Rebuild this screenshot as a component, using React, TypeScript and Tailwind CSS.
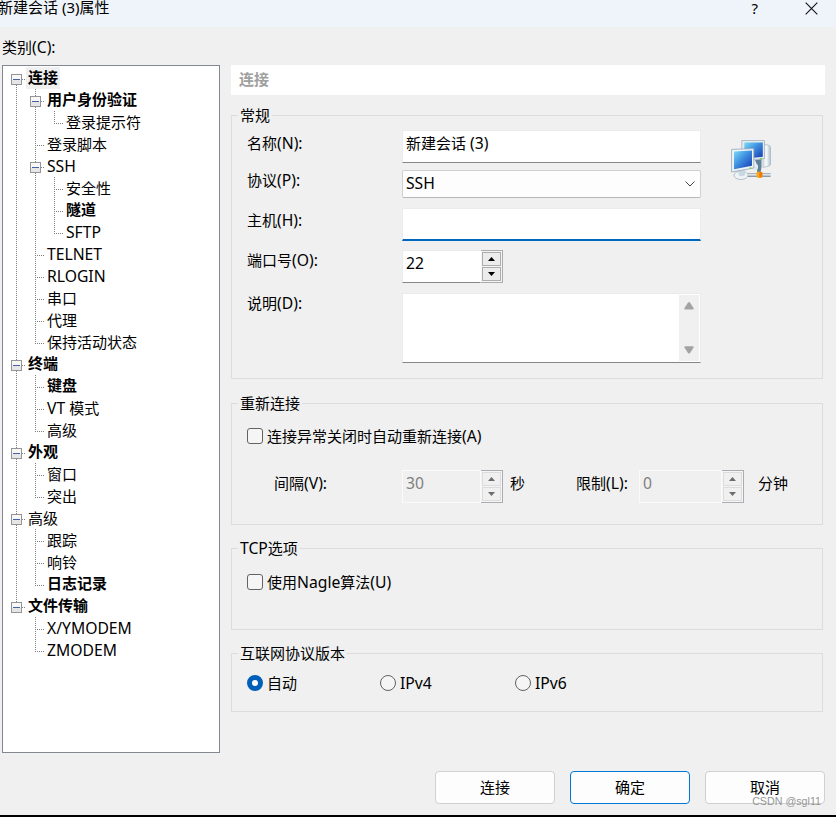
import React from "react";
import clsx from "clsx";

type Guide = "none" | "line" | "tee" | "corner" | "first" | "mid" | "last";

type TreeItem = {
  label: string;
  guides: Guide[];
  bold?: boolean;
  selected?: boolean;
};

// "first", "mid" and "last" carry an expander box, the others are plain guides
const items: TreeItem[] = [
  { label: "连接", guides: ["first"], bold: true, selected: true },
  { label: "用户身份验证", guides: ["line", "mid"], bold: true },
  { label: "登录提示符", guides: ["line", "line", "corner"] },
  { label: "登录脚本", guides: ["line", "tee"] },
  { label: "SSH", guides: ["line", "mid"] },
  { label: "安全性", guides: ["line", "line", "tee"] },
  { label: "隧道", guides: ["line", "line", "tee"], bold: true },
  { label: "SFTP", guides: ["line", "line", "corner"] },
  { label: "TELNET", guides: ["line", "tee"] },
  { label: "RLOGIN", guides: ["line", "tee"] },
  { label: "串口", guides: ["line", "tee"] },
  { label: "代理", guides: ["line", "tee"] },
  { label: "保持活动状态", guides: ["line", "corner"] },
  { label: "终端", guides: ["mid"], bold: true },
  { label: "键盘", guides: ["line", "tee"], bold: true },
  { label: "VT 模式", guides: ["line", "tee"] },
  { label: "高级", guides: ["line", "corner"] },
  { label: "外观", guides: ["mid"], bold: true },
  { label: "窗口", guides: ["line", "tee"] },
  { label: "突出", guides: ["line", "corner"] },
  { label: "高级", guides: ["mid"] },
  { label: "跟踪", guides: ["line", "tee"] },
  { label: "响铃", guides: ["line", "tee"] },
  { label: "日志记录", guides: ["line", "corner"], bold: true },
  { label: "文件传输", guides: ["last"], bold: true },
  { label: "X/YMODEM", guides: ["none", "tee"] },
  { label: "ZMODEM", guides: ["none", "corner"] },
];

// latin runs are set slightly larger than the chinese text around them
function Text({ children }: { children: string }) {
  return (
    <>
      {children.split(/([ -~]+)/).map((part, i) =>
        i % 2 ? (
          <span key={i} className="text-[15.7px]">
            {part}
          </span>
        ) : (
          part
        )
      )}
    </>
  );
}

function GuideCell({ type }: { type: Guide }) {
  const box = type === "first" || type === "mid" || type === "last";
  const top = type !== "none" && type !== "first";
  const bottom = type === "line" || type === "tee" || type === "first" || type === "mid";
  const side = type !== "none" && type !== "line";
  return (
    <svg width="19" height="22" className="shrink-0" shapeRendering="crispEdges">
      <g stroke="#808080" strokeDasharray="1 1">
        {top && <path d="M9.5 0V12" />}
        {bottom && <path d="M9.5 12V22" />}
        {side && <path d="M9 12.5H19" />}
      </g>
      {box && (
        <g>
          <rect x="4.5" y="7.5" width="10" height="10" fill="#f8f8f8" stroke="#959595" />
          <rect x="5" y="13" width="9" height="4" fill="#e6e6e6" />
          <path d="M6 12.5H13" stroke="#4660a8" />
        </g>
      )}
    </svg>
  );
}

function Tree() {
  return (
    <div className="h-[688px] w-[218px] border border-[#828790] bg-white pt-px pl-1">
      {items.map((item, i) => (
        <div key={i} className="flex h-[22px]">
          {item.guides.map((g, j) => (
            <GuideCell key={j} type={g} />
          ))}
          <span
            className={clsx(
              "h-[22px] px-0.5 whitespace-nowrap",
              item.bold ? "leading-[20px] font-bold" : "leading-[22px]",
              item.selected && "bg-[#f0f0f0]"
            )}
          >
            <Text>{item.label}</Text>
          </span>
        </div>
      ))}
    </div>
  );
}

type GroupProps = { title: string; className: string; children: React.ReactNode };

function Group({ title, className, children }: GroupProps) {
  return (
    <section className={clsx("relative w-[592px] border border-[#dcdcdc]", className)}>
      <h2 className="absolute -top-[12px] left-[6px] bg-[#f0f0f0] px-0.5 leading-[22px]">
        <Text>{title}</Text>
      </h2>
      {children}
    </section>
  );
}

function Spinner({ value, disabled, className }: { value: string; disabled?: boolean; className: string }) {
  const button = clsx(
    "flex flex-1 items-center justify-center border",
    disabled ? "border-[#dcdcdc] bg-[#f0f0f0]" : "border-[#adadad] bg-[#ececec]"
  );
  const fill = disabled ? "#6d6d6d" : "#000";
  return (
    <div className={clsx("flex h-[33px]", className)}>
      <div
        className={clsx(
          "flex-1 border pl-[3px] leading-[25px]",
          disabled
            ? "border-[#fafafa] text-[#808080]"
            : "border-t-[#ebebeb] border-r-white border-b-[#868686] border-l-[#ebebeb] bg-white"
        )}
      >
        <Text>{value}</Text>
      </div>
      <div className="flex w-[22px] flex-col gap-px border-y border-r border-[#acabb2] bg-[#f5f5f5] p-px">
        <div className={button}>
          <svg width="7" height="4">
            <path d="M0 4L3.5 0L7 4Z" fill={fill} />
          </svg>
        </div>
        <div className={button}>
          <svg width="7" height="4">
            <path d="M0 0L3.5 4L7 0Z" fill={fill} />
          </svg>
        </div>
      </div>
    </div>
  );
}

function CheckBox({ label }: { label: string }) {
  return (
    <label className="flex h-4 items-center gap-1">
      <span className="size-4 rounded-[3px] border border-[#626262] bg-[#f5f5f5]" />
      <span className="leading-4">
        <Text>{label}</Text>
      </span>
    </label>
  );
}

function Radio({ label, checked }: { label: string; checked?: boolean }) {
  return (
    <label className="flex h-4 items-center gap-1">
      {checked ? (
        <span className="size-4 rounded-full border-[5px] border-[#005fb8] bg-white" />
      ) : (
        <span className="size-4 rounded-full border border-[#626262] bg-[#f5f5f5]" />
      )}
      <span className="leading-4">
        <Text>{label}</Text>
      </span>
    </label>
  );
}

function NetworkIcon() {
  return (
    <svg width="40" height="40" viewBox="0 0 40 40">
      <defs>
        <linearGradient id="screen" x1="0" y1="0" x2="1" y2="1">
          <stop offset="0" stopColor="#7ddcf6" />
          <stop offset="0.45" stopColor="#3f8fe0" />
          <stop offset="1" stopColor="#1437b0" />
        </linearGradient>
        <linearGradient id="metal" x1="0" y1="0" x2="0" y2="1">
          <stop offset="0" stopColor="#8798a6" />
          <stop offset="0.45" stopColor="#e6edf1" />
          <stop offset="1" stopColor="#74879a" />
        </linearGradient>
        <linearGradient id="tower" x1="0" y1="0" x2="1" y2="0">
          <stop offset="0" stopColor="#dfe8ed" />
          <stop offset="0.5" stopColor="#f4f8fa" />
          <stop offset="1" stopColor="#a9bdc9" />
        </linearGradient>
      </defs>
      <path d="M32 4L38.5 5.5Q39.6 6 39.6 8V24Q39.6 25.5 38 26L32 27.5Z" fill="url(#tower)" stroke="#a6b8c3" strokeWidth="0.7" />
      <path d="M24 20L30.5 19V27L29.5 33H26L26.5 26Z" fill="#5f8199" />
      <path d="M20 28L27 24.5V28.5L23 30.5Z" fill="#dfe8ed" />
      <path d="M10.8 0.5H33.5V18.6L10.8 21Z" fill="#e3ebf0" stroke="#a0b2be" strokeWidth="0.8" />
      <path d="M13.3 2.4H31.8V16.8L13.3 18.8Z" fill="url(#screen)" />
      <circle cx="30" cy="18.6" r="0.9" fill="#68d33e" />
      <ellipse cx="10" cy="35.3" rx="7" ry="4.2" fill="#eef4f7" stroke="#a3b6c2" strokeWidth="0.8" />
      <path d="M7.5 30H14V35Q10.5 37.5 7.5 35Z" fill="#c8d8e1" />
      <path d="M0.6 9.4L22.8 8.6V28L0.6 32Z" fill="#eff4f7" stroke="#8fa6b5" strokeWidth="0.8" />
      <path d="M3 11.4L21 10.6V25.8L3 29.3Z" fill="url(#screen)" />
      <circle cx="19.5" cy="28.1" r="0.9" fill="#68d33e" />
      <rect x="16.5" y="32.9" width="23.3" height="4" rx="0.8" fill="url(#metal)" />
      <rect x="25.5" y="31.8" width="6" height="6" rx="1.2" fill="#f7a814" />
      <path d="M28.5 32H30.5Q31.3 32.2 31.3 33V36.6Q31 37.6 30 37.6H28Z" fill="#f27a0d" />
    </svg>
  );
}

export default function App() {
  return (
    <div className="relative flex h-[817px] w-[836px] flex-col overflow-hidden border-b-2 border-black bg-[#f0f0f0] font-['Noto_Sans','Noto_Sans_CJK_SC',sans-serif] text-[15px] text-black">
      <header className="flex h-[27px] shrink-0 justify-between bg-[#eff4fb]">
        <h1 className="-ml-0.5 h-4 text-[15px] leading-[15px] whitespace-nowrap">新建会话 (3)属性</h1>
        <div className="flex h-4 items-center pr-[18px]">
          <span className="mr-[47px] text-[15px] leading-4">?</span>
          <svg width="13" height="13" stroke="#111" strokeWidth="1.1">
            <path d="M0.7 0.7L12.3 12.3M12.3 0.7L0.7 12.3" />
          </svg>
        </div>
      </header>

      <main className="flex shrink-0 pl-0.5">
        <aside className="w-[229px]">
          <p className="pt-[9px] pb-[7px] leading-[22px]">
            <Text>类别(C):</Text>
          </p>
          <Tree />
        </aside>

        <div className="pt-[38px]">
          <div className="h-[30px] w-[594px] bg-white pl-2 leading-[28px] font-bold text-[#a0a0a0]">连接</div>

          <Group title="常规" className="mt-5 h-[264px] pt-[14px] pl-[15px]">
            <div className="flex">
              <div className="w-[155px]">
                <p className="h-10 leading-[26px]">
                  <Text>名称(N):</Text>
                </p>
                <p className="h-[38px] leading-[20px]">
                  <Text>协议(P):</Text>
                </p>
                <p className="h-[42px] leading-[24px]">
                  <Text>主机(H):</Text>
                </p>
                <p className="h-[43px] leading-[20px]">
                  <Text>端口号(O):</Text>
                </p>
                <p className="leading-[20px]">
                  <Text>说明(D):</Text>
                </p>
              </div>
              <div className="w-[299px]">
                <div className="h-[33px] border border-[#ebebeb] border-b-[#868686] bg-white pl-[3px] leading-[25px]">
                  <Text>新建会话 (3)</Text>
                </div>
                <div className="mt-[7px] flex h-7 items-center justify-between rounded-[2px] border border-[#d0d0d0] border-b-[#b8b8b8] bg-[#fdfdfd] pr-[5px] pl-[3px]">
                  <span>
                    <Text>SSH</Text>
                  </span>
                  <svg width="10" height="6" fill="none" stroke="#444">
                    <path d="M0.5 0.5L5 5L9.5 0.5" />
                  </svg>
                </div>
                <div className="mt-[10px] h-[33px] border border-b-2 border-[#ebebeb] border-b-[#0067c0] bg-white" />
                <Spinner value="22" className="mt-[9px] w-[101px]" />
                <div className="mt-[10px] flex h-[70px] justify-end border border-[#ebebeb] border-b-[#868686] bg-white p-px">
                  <div className="flex w-5 flex-col items-center justify-between bg-[#f0f0f0] py-[7px]">
                    <svg width="10" height="8" fill="#a3a3a3">
                      <path d="M4 0.6Q5 -0.4 6 0.6L9.5 6Q10 7.5 8.5 7.5H1.5Q0 7.5 0.5 6Z" />
                    </svg>
                    <svg width="10" height="8" fill="#a3a3a3">
                      <path d="M4 7.1Q5 8.1 6 7.1L9.5 1.7Q10 0.2 8.5 0.2H1.5Q0 0.2 0.5 1.7Z" />
                    </svg>
                  </div>
                </div>
              </div>
              <div className="pt-[10px] pl-[30px]">
                <NetworkIcon />
              </div>
            </div>
          </Group>

          <Group title="重新连接" className="mt-6 h-[122px] pt-6 pl-[15px]">
            <CheckBox label="连接异常关闭时自动重新连接(A)" />
            <div className="mt-[26px] flex leading-[26px]">
              <span className="w-[155px] pl-[27px]">
                <Text>间隔(V):</Text>
              </span>
              <Spinner value="30" disabled className="w-[101px]" />
              <span className="w-[73px] pl-[7px]">秒</span>
              <span className="w-[63px]">
                <Text>限制(L):</Text>
              </span>
              <Spinner value="0" disabled className="w-[105px]" />
              <span className="pl-[14px]">分钟</span>
            </div>
          </Group>

          <Group title="TCP选项" className="mt-[23px] h-[82px] pt-[25px] pl-[15px]">
            <CheckBox label="使用Nagle算法(U)" />
          </Group>

          <Group title="互联网协议版本" className="mt-[23px] h-[59px] pt-[21px] pl-[15px]">
            <div className="grid grid-cols-[133px_135px_135px]">
              <Radio label="自动" checked />
              <Radio label="IPv4" />
              <Radio label="IPv6" />
            </div>
          </Group>
        </div>
      </main>

      <footer className="mt-[18px] flex shrink-0 justify-end gap-[15px] pr-[11px]">
        {["连接", "确定", "取消"].map((text) => (
          <button
            key={text}
            className={clsx(
              "h-[33px] w-[120px] rounded-[4px] border bg-[#fdfdfd]",
              text === "确定" ? "border-[#0078d4]" : "border-[#d0d0d0]"
            )}
          >
            {text}
          </button>
        ))}
      </footer>
      <span className="absolute right-[15px] bottom-[7px] font-['Liberation_Sans',sans-serif] text-[10.7px] leading-[14px] text-[#959595]">
        CSDN @sgl11
      </span>
    </div>
  );
}
